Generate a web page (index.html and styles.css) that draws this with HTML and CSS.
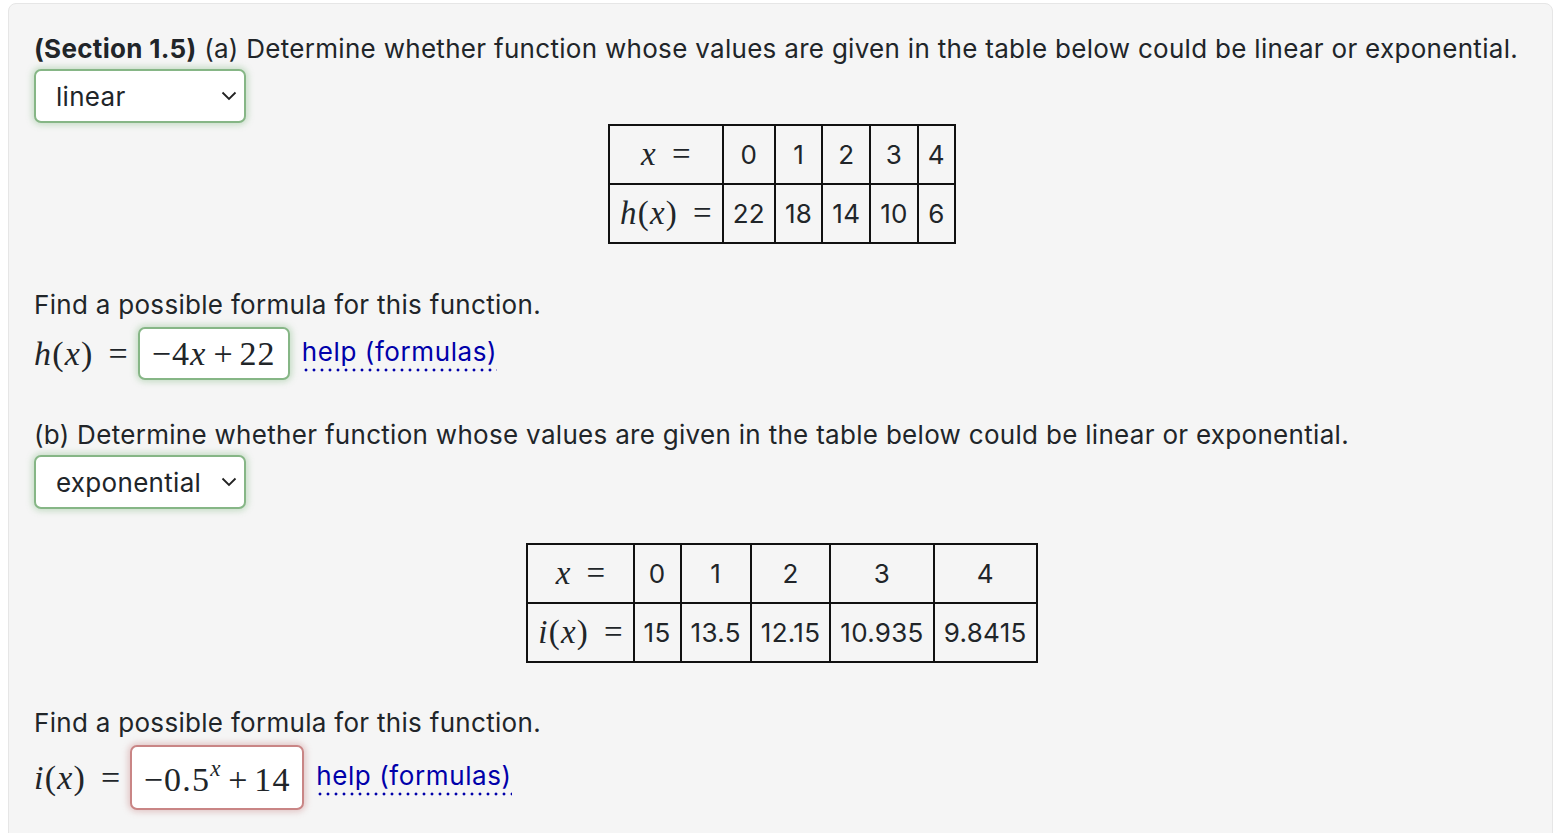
FILE: index.html
```html
<!DOCTYPE html>
<html>
<head>
<meta charset="utf-8">
<link rel="stylesheet" href="styles.css">
</head>
<body>
<div class="problem">
  <p class="line first"><b>(Section 1.5)</b> (a) Determine whether function whose values are given in the table below could be linear or exponential.</p>
  <div class="select ok">
    <span>linear</span>
    <svg class="chev" width="16" height="10" viewBox="0 0 16 10"><path d="M1.5 1.5 L8 8 L14.5 1.5" fill="none" stroke="#222" stroke-width="1.8"/></svg>
  </div>
  <table class="vals t1">
    <tr><td class="m"><i>x</i><span class="rel">=</span></td><td>0</td><td>1</td><td>2</td><td>3</td><td>4</td></tr>
    <tr><td class="m"><i>h</i>(<i>x</i>)<span class="rel">=</span></td><td>22</td><td>18</td><td>14</td><td>10</td><td>6</td></tr>
  </table>
  <p class="line find f1">Find a possible formula for this function.</p>
  <div class="formula">
    <span class="m lhs"><i>h</i>(<i>x</i>)<span class="rel">=</span></span>
    <span class="answer ok a1"><span class="m">−4<i>x</i><span class="bin">+</span>22</span></span>
    <a class="help">help (formulas)</a>
  </div>
  <p class="line partb">(b) Determine whether function whose values are given in the table below could be linear or exponential.</p>
  <div class="select ok">
    <span>exponential</span>
    <svg class="chev" width="16" height="10" viewBox="0 0 16 10"><path d="M1.5 1.5 L8 8 L14.5 1.5" fill="none" stroke="#222" stroke-width="1.8"/></svg>
  </div>
  <table class="vals t2">
    <tr><td class="m"><i>x</i><span class="rel">=</span></td><td>0</td><td>1</td><td>2</td><td>3</td><td>4</td></tr>
    <tr><td class="m"><i>i</i>(<i>x</i>)<span class="rel">=</span></td><td>15</td><td>13.5</td><td>12.15</td><td>10.935</td><td>9.8415</td></tr>
  </table>
  <p class="line find f2">Find a possible formula for this function.</p>
  <div class="formula">
    <span class="m lhs"><i>i</i>(<i>x</i>)<span class="rel">=</span></span>
    <span class="answer bad a2"><span class="m">−0.5<sup><i>x</i></sup><span class="bin">+</span>14</span></span>
    <a class="help">help (formulas)</a>
  </div>
</div>
</body>
</html>
```

FILE: styles.css
```css
html, body {
  margin: 0;
  padding: 0;
  background: #ffffff;
}
body {
  font-family: Inter, "Liberation Sans", sans-serif;
  font-size: 26px;
  letter-spacing: 0.3px;
  color: #212529;
}
.problem {
  margin: 3px 0 0 8px;
  width: 1545px;
  height: 840px;
  box-sizing: border-box;
  background: #f5f5f5;
  border: 1px solid #e6e6e6;
  border-radius: 8px;
  padding: 27px 0 0 25px;
}
.line {
  margin: 0;
  line-height: 36px;
}
.line b { font-weight: 700; }
.select {
  width: 212px;
  height: 54px;
  box-sizing: border-box;
  background: #fff;
  border: 2px solid #86b686;
  border-radius: 7px;
  box-shadow: 0 0 6px 2px rgba(110, 175, 110, 0.35);
  display: flex;
  align-items: center;
  justify-content: space-between;
  padding: 0 7px 0 20px;
  margin-top: 2px;
}
.chev { display: block; }
.vals {
  border-collapse: collapse;
  margin: 1px auto 0;
  position: relative;
  left: -11px;
}
.vals td {
  border: 2px solid #111;
  padding: 12px 9px;
  line-height: 33px;
  text-align: center;
}
.m {
  font-family: "Liberation Serif", "DejaVu Serif", serif;
  font-size: 34px;
  letter-spacing: 1.2px;
  white-space: nowrap;
}
.vals td.m { font-size: 33px; padding: 12px 10px; }
.m i { font-style: italic; }
.rel { margin: 0 0 0 15px; letter-spacing: 0; }
.bin { margin: 0 0.2em; letter-spacing: 0; }
.f1 { margin-top: 43px; }
.f2 { margin-top: 42px; }
.formula {
  display: flex;
  align-items: center;
  margin-top: 4px;
}
.lhs { flex: none; margin-right: 10px; line-height: 40px; }
.answer {
  display: flex;
  align-items: center;
  justify-content: center;
  background: #fff;
  border-radius: 7px;
  box-sizing: border-box;
}
.answer .m { line-height: 40px; }
.answer.ok {
  border: 2px solid #86b686;
  box-shadow: 0 0 6px 2px rgba(110, 175, 110, 0.35);
}
.answer.bad {
  border: 2px solid #c98585;
  box-shadow: 0 0 6px 2px rgba(190, 110, 110, 0.35);
}
.a1 { width: 152px; height: 53px; }
.a2 { width: 174px; height: 65px; padding-top: 4px; }
.a2 sup { font-size: 23px; line-height: 0; vertical-align: 15px; }
.help {
  color: #0000aa;
  margin-left: 12px;
  padding-bottom: 5px;
  letter-spacing: 0.6px;
  background-image: radial-gradient(circle, #0000aa 1.3px, transparent 1.7px);
  background-size: 8px 4px;
  background-repeat: repeat-x;
  background-position: 0 100%;
}
.partb { margin-top: 37px; }
.t2 { margin-top: 34px; }
```
